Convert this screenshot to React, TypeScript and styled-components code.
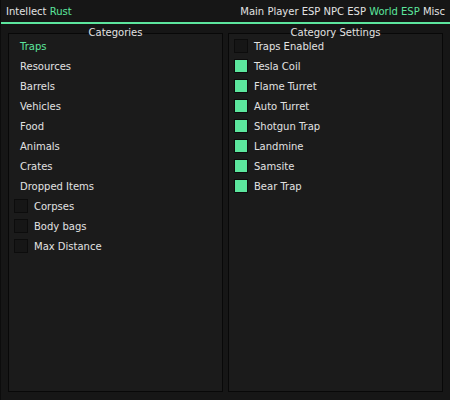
import React from "react";
import styled, { createGlobalStyle } from "styled-components";

const Global = createGlobalStyle`
  html, body { margin: 0; padding: 0; background: #151515; }
  #root { height: 400px; }
  * { box-sizing: border-box; }
`;

const GREEN = "#5ce69e";
const TEXT = "#e2e2e2";

const Window = styled.div`
  height: 400px;
  width: 450px;
  background: #161616;
  border-left: 1px solid #0c0c0c;
  display: flex;
  flex-direction: column;
  font-family: "DejaVu Sans", sans-serif;
  font-size: 10px;
  color: ${TEXT};
`;

const Header = styled.div`
  height: 24px;
  display: flex;
  align-items: center;
  justify-content: space-between;
  padding: 0 5px;
  border-bottom: 2px solid ${GREEN};
  white-space: pre;
`;

const Brand = styled.div`
  display: flex;
`;

const Accent = styled.span<{ $on?: boolean }>`
  color: ${(p) => (p.$on ? GREEN : TEXT)};
`;

const Nav = styled.div`
  display: flex;
`;

const Body = styled.div`
  flex: 1;
  display: grid;
  grid-template-columns: 1fr 1fr;
  gap: 5px;
  padding: 9px 7px 8px 7px;
`;

const Panel = styled.div`
  position: relative;
  background: #1b1b1b;
  border: 1px solid #080808;
  padding: 2px 0 0 0;
`;

const PanelTitle = styled.div`
  position: absolute;
  top: -7px;
  left: 0;
  right: 0;
  text-align: center;
  line-height: 12px;
`;

const Row = styled.div<{ $indent: number }>`
  height: 20px;
  display: flex;
  align-items: center;
  gap: 6px;
  padding-left: ${(p) => p.$indent}px;
`;

const Box = styled.div<{ $checked?: boolean }>`
  width: 14px;
  height: 14px;
  border: 1px solid #0c0c0c;
  background: ${(p) => (p.$checked ? GREEN : "#161616")};
`;

const Label = styled.span<{ $active?: boolean }>`
  color: ${(p) => (p.$active ? GREEN : TEXT)};
`;

const categories = ["Traps", "Resources", "Barrels", "Vehicles", "Food", "Animals", "Crates", "Dropped Items"];
const options = ["Corpses", "Body bags", "Max Distance"];
const settings: [string, boolean][] = [
  ["Traps Enabled", false],
  ["Tesla Coil", true],
  ["Flame Turret", true],
  ["Auto Turret", true],
  ["Shotgun Trap", true],
  ["Landmine", true],
  ["Samsite", true],
  ["Bear Trap", true],
];
const tabs = ["Main", "Player ESP", "NPC ESP", "World ESP", "Misc"];

export default function App() {
  return (
    <>
      <Global />
      <Window>
        <Header>
          <Brand>
            <Accent>Intellect </Accent>
            <Accent $on>Rust</Accent>
          </Brand>
          <Nav>
            {tabs.map((t, i) => (
              <Accent key={t} $on={t === "World ESP"}>
                {t}
                {i < tabs.length - 1 ? " " : ""}
              </Accent>
            ))}
          </Nav>
        </Header>
        <Body>
          <Panel>
            <PanelTitle>Categories</PanelTitle>
            {categories.map((c, i) => (
              <Row key={c} $indent={11}>
                <Label $active={i === 0}>{c}</Label>
              </Row>
            ))}
            {options.map((o) => (
              <Row key={o} $indent={5}>
                <Box />
                <Label>{o}</Label>
              </Row>
            ))}
          </Panel>
          <Panel>
            <PanelTitle>Category Settings</PanelTitle>
            {settings.map(([s, on]) => (
              <Row key={s} $indent={5}>
                <Box $checked={on} />
                <Label>{s}</Label>
              </Row>
            ))}
          </Panel>
        </Body>
      </Window>
    </>
  );
}
